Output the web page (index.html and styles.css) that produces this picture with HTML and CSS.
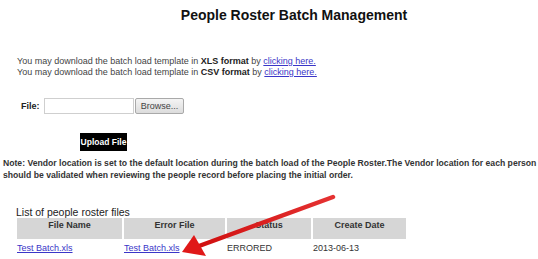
FILE: index.html
```html
<!DOCTYPE html>
<html lang="en">
<head>
    <meta charset="UTF-8">
    <title>People Roster Batch Management</title>
    <link rel="stylesheet" href="styles.css">
</head>
<body>
    <div class="page">
        <h1 class="title">People Roster Batch Management</h1>

        <div class="downloads">
            <p>You may download the batch load template in <b>XLS format</b> by <a href="#">clicking here.</a></p>
            <p>You may download the batch load template in <b>CSV format</b> by <a href="#">clicking here.</a></p>
        </div>

        <div class="file-row">
            <label class="file-label">File:</label>
            <span class="file-input"></span>
            <button class="browse">Browse...</button>
        </div>

        <div class="upload-row">
            <button class="upload">Upload File</button>
        </div>

        <p class="note">Note: Vendor location is set to the default location during the batch load of the People Roster.The Vendor location for each person should be validated when reviewing the people record before placing the initial order.</p>

        <div class="files">
            <div class="files-caption">List of people roster files</div>
            <table class="files-table">
                <thead>
                    <tr>
                        <th class="col-name">File Name</th>
                        <th class="col-error">Error File</th>
                        <th class="col-status">Status</th>
                        <th class="col-date">Create Date</th>
                    </tr>
                </thead>
                <tbody>
                    <tr>
                        <td><a href="#">Test Batch.xls</a></td>
                        <td><a href="#">Test Batch.xls</a></td>
                        <td>ERRORED</td>
                        <td>2013-06-13</td>
                    </tr>
                </tbody>
            </table>
        </div>

        <!-- red annotation arrow drawn over the table -->
        <svg class="arrow" width="170" height="70" viewBox="0 0 170 70">
            <defs>
                <linearGradient id="shaft" x1="0" y1="0" x2="1" y2="0">
                    <stop offset="0" stop-color="#d01010"/>
                    <stop offset="1" stop-color="#e53232"/>
                </linearGradient>
            </defs>
            <path d="M161 4 L27 53" stroke="url(#shaft)" stroke-width="4.5" stroke-linecap="round" fill="none"/>
            <path d="M10 59 L22 42 L34 63 Z" fill="#e01818"/>
        </svg>
    </div>
</body>
</html>
```

FILE: styles.css
```css
body {
    margin: 0;
    background: #fff;
    font-family: "Liberation Sans", Arial, sans-serif;
    color: #333;
}

.page {
    position: relative;
    width: 538px;
    height: 259px;
    overflow: hidden;
}

.title {
    margin: 0;
    padding: 7px 0 0 50px;
    font-size: 14px;
    line-height: 16px;
    text-align: center;
    color: #111;
}

.downloads {
    margin-top: 33px;
    padding-left: 17px;
    font-size: 9px;
    line-height: 11px;
    color: #444;
}

.downloads p {
    margin: 0;
}

.downloads b {
    color: #222;
}

a {
    color: #3a36c8;
    text-decoration: underline;
}

.file-row {
    display: flex;
    align-items: center;
    margin-top: 20px;
    padding-left: 21px;
}

.file-label {
    width: 23px;
    font-size: 9px;
    font-weight: bold;
    color: #222;
}

.file-input {
    width: 88px;
    height: 14px;
    border: 1px solid #cfcfcf;
    background: #fff;
}

.browse {
    margin-left: 1px;
    width: 49px;
    height: 16px;
    padding: 0;
    border: 1px solid #a9a9a9;
    border-radius: 2px;
    background: linear-gradient(#f4f4f4, #dcdcdc);
    font-family: inherit;
    font-size: 9px;
    color: #444;
}

.upload-row {
    margin-top: 17px;
    padding-left: 80px;
}

.upload {
    width: 47px;
    height: 18px;
    padding: 0;
    border: 0;
    background: #000;
    color: #fff;
    font-family: inherit;
    font-size: 8.5px;
    font-weight: bold;
}

.note {
    width: 545px;
    margin: 6px 0 0 3px;
    font-size: 8.65px;
    line-height: 12px;
    font-weight: bold;
    color: #333;
}

.files {
    margin-top: 25px;
    padding-left: 16px;
}

.files-caption {
    font-size: 10.5px;
    line-height: 12px;
    color: #222;
}

.files-table {
    border-collapse: separate;
    border-spacing: 2px 0;
    margin-left: -1px;
    font-size: 9px;
}

.files-table th {
    height: 21px;
    padding: 0;
    background: #d6d6d6;
    color: #333;
    text-align: center;
    vertical-align: top;
    line-height: 14px;
}

.col-name { width: 105px; }
.col-error { width: 101px; }
.col-status { width: 84px; }
.col-date { width: 93px; }

.files-table td {
    padding: 4px 0 0 0;
    color: #333;
}

.arrow {
    position: absolute;
    left: 172px;
    top: 193px;
}
```
